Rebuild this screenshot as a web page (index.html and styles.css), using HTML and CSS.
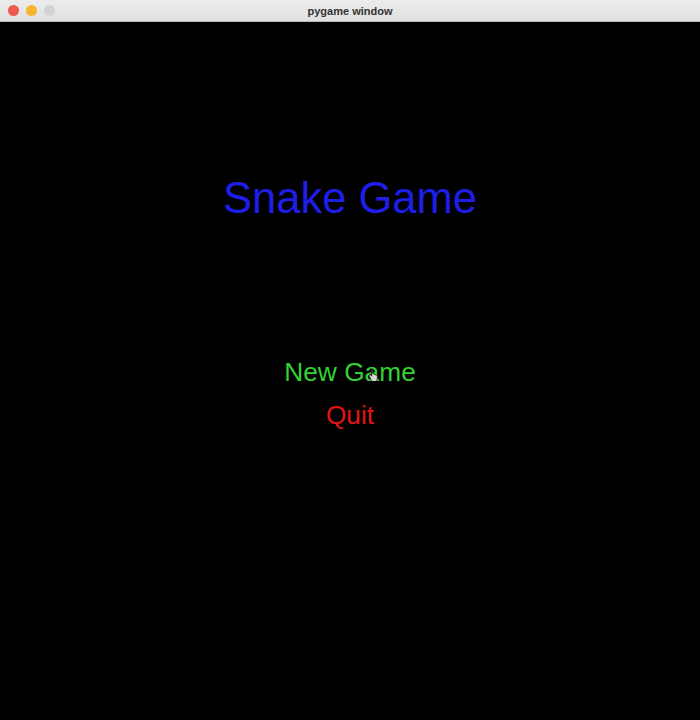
FILE: index.html
```html
<!DOCTYPE html>
<html>
<head>
<meta charset="utf-8">
<link rel="stylesheet" href="styles.css">
</head>
<body>
<div class="window">
  <div class="titlebar">
    <div class="lights">
      <span class="light red"></span>
      <span class="light yellow"></span>
      <span class="light gray"></span>
    </div>
    <div class="title">pygame window</div>
  </div>
  <div class="screen">
    <div class="game-title">Snake Game</div>
    <div class="menu">
      <div class="item new">New Game
        <svg class="cursor" width="12" height="14" viewBox="0 0 12 14">
          <path d="M3 1.2c.7 0 1.2.5 1.2 1.2v4.2l.6-.2c.6 0 1 .4 1.1.9l.6-.1c.6 0 1 .4 1.1.9l.5-.1c.7 0 1.2.5 1.2 1.2v2.6c0 1.6-1.3 2.9-2.9 2.9H5.6c-.9 0-1.6-.4-2.1-1.1L1.2 9.3c-.3-.5-.2-1.1.3-1.4.4-.3 1-.2 1.3.2l.9 1.1V2.4C1.8 1.7 2.3 1.2 3 1.2z" fill="#d9d9d9" stroke="#222" stroke-width=".8"/>
        </svg>
      </div>
      <div class="item quit">Quit</div>
    </div>
  </div>
</div>
</body>
</html>
```

FILE: styles.css
```css
html, body {
  margin: 0;
  padding: 0;
  background: #000;
}
.window {
  width: 700px;
  height: 720px;
  display: flex;
  flex-direction: column;
  background: #000;
}
.titlebar {
  height: 22px;
  flex: none;
  background: linear-gradient(#ececec, #e0e0e0);
  border-bottom: 1px solid #b8b8b8;
  box-sizing: border-box;
  position: relative;
  display: flex;
  align-items: center;
  justify-content: center;
}
.lights {
  position: absolute;
  left: 8px;
  top: 5px;
  display: flex;
  gap: 7px;
}
.light {
  width: 11px;
  height: 11px;
  border-radius: 50%;
  display: block;
}
.light.red { background: #ee5a52; }
.light.yellow { background: #f3b52b; }
.light.gray { background: #d3d3d3; }
.title {
  font-family: "Liberation Sans", Arial, sans-serif;
  font-weight: bold;
  font-size: 11px;
  color: #333;
}
.screen {
  flex: 1;
  background: #000;
  display: flex;
  flex-direction: column;
  align-items: center;
  padding-top: 151px;
  font-family: "Liberation Sans", Arial, sans-serif;
}
.game-title {
  font-size: 43.5px;
  line-height: 50px;
  color: #1e1ee6;
}
.menu {
  margin-top: 134px;
  display: flex;
  flex-direction: column;
  align-items: center;
  gap: 13px;
}
.item {
  font-size: 26.3px;
  line-height: 30px;
  position: relative;
}
.item.new { color: #33d133; }
.item.quit { color: #e01515; }
.cursor {
  position: absolute;
  left: 84px;
  top: 10px;
}
```
